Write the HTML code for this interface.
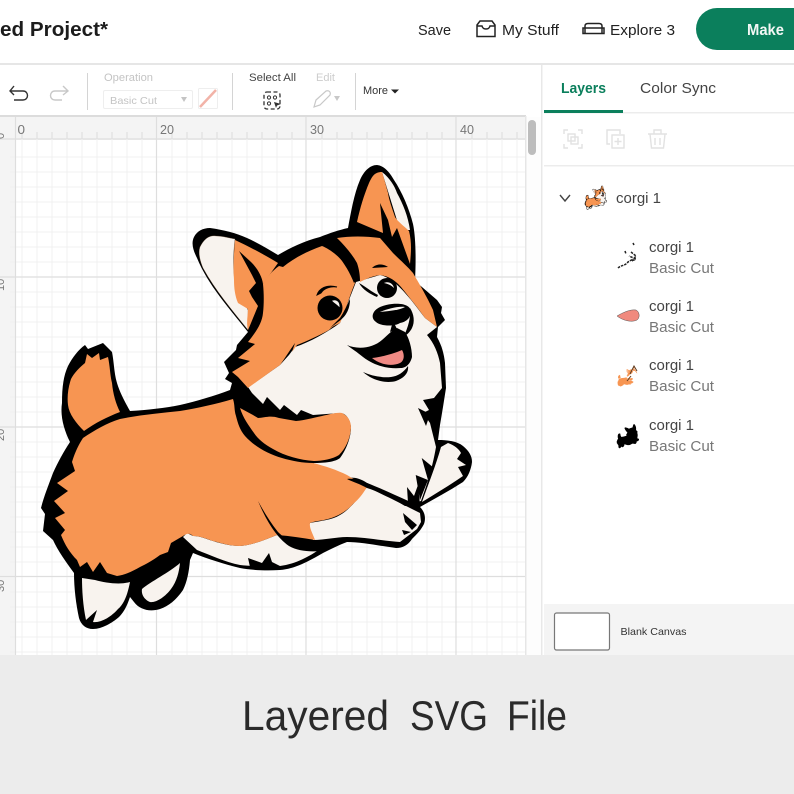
<!DOCTYPE html>
<html><head><meta charset="utf-8"><style>
html,body{margin:0;padding:0;background:#fff}
svg{display:block;font-family:"Liberation Sans",sans-serif}
</style></head><body>
<svg width="794" height="794" viewBox="0 0 794 794" xmlns="http://www.w3.org/2000/svg">
<defs>
<path id="sil" d="M377 165C385 166 390 173 394 180C402 192 409 208 413 224C416 238 416 262 415 281L437 300L442 307L441 313L445 320L438 327L437 337C442 346 444 354 445 363L446 388L443 407L440 425L438 440C447 440 457 441 463 446C469 451 472 456 472 462C471 470 468 477 463 482C449 491 434 499 420 507C425 512 426 518 424 524C421 530 417 534 412 539C408 545 403 548 396 548C380 546 362 542 347 542C339 545 331 549 323 553C309 561 295 569 280 570C265 571 251 570 240 568C224 564 208 559 193 553L190 560C189 572 187 582 183 590C176 600 169 606 160 609C150 612 140 610 134 602L130 597C127 606 124 612 119 617C112 623 102 629 93 629C86 629 81 625 79 618C76 604 74 588 74 573C66 562 58 551 53 540L43 531L45 514L41 508C44 496 49 484 53 473C58 462 64 451 70 442C64 430 60 416 62 403C62 389 63 377 68 366C72 358 79 349 85 345L88 349L103 343L112 352C114 362 114 373 117 383C120 393 125 402 130 411C147 410 165 408 180 405C197 401 214 396 230 390L232 383L225 379L229 373L224 362L236 350L237 345L248 332C229 308 208 285 197 258C193 250 191 243 194 237C197 231 203 228 210 228C224 230 236 233 247 238C258 243 268 249 278 255C290 248 304 241 320 237C330 233 339 230 348 228C351 212 354 194 360 180C364 171 370 165 377 165Z"/>
<path id="orb" d="M83 438C95 430 107 423 120 419C140 415 160 413 180 411C198 408 216 404 233 399C235 405 234 410 236 416C238 424 240 430 245 436C255 447 268 454 282 458C292 461 303 463 313 463C325 466 337 470 347 475L367 487C362 495 359 499 353 504C346 512 336 517 328 519C321 521 314 521 310 523C309 528 313 534 315 540C303 538 290 536 277 535C265 540 252 545 240 546C230 546 221 543 213 541C207 539 200 536 193 536C190 533 187 533 183 536L171 543L168 552L160 555C152 561 146 564 140 567C133 571 125 575 117 576L107 573L100 562L93 572L87 562L80 567L77 560C70 553 65 545 61 535L65 530L55 518L65 513L54 501L68 491L57 483L75 471L72 462C75 452 79 444 83 438Z"/>
<path id="ort" d="M85 363L87 354L92 358L99 353L100 360L108 357C110 366 110 375 112 383C113 394 116 404 120 412C107 417 95 423 84 431C76 423 69 414 68 405C67 397 68 388 71 379C74 373 80 367 85 363Z"/>
<path id="orarm" d="M240 408L253 415L258 418C264 418 270 415 279 418L296 421C306 420 312 418 322 416C330 414 339 412 342 413C348 416 351 421 351 428C350 440 345 449 339 455C333 459 322 461 314 461C300 460 285 456 273 449C264 444 258 439 254 433C249 426 243 418 240 408Z"/>
<path id="orh" d="M355 283C349 297 346 310 340 323C336 325 333 326 329 330C318 336 307 341 297 345L292 352L295 343C290 350 285 358 280 365C270 372 259 380 248 388L238 377L232 372L250 361L238 358L255 344L248 342C255 333 262 324 263 313C264 304 264 294 263 284C267 277 272 271 279 266L283 267C293 259 305 252 322 246C332 250 348 262 355 283Z"/>
<path id="ore" d="M235 240C248 246 265 255 278 263L263 284C262 276 257 268 251 262L239 251L252 275L256 283L249 291L252 297L258 306C255 313 252 321 248 330C246 323 248 315 248 309L238 303C235 296 234 288 234 280C233 266 234 252 235 240Z"/>
<path id="orf" d="M337 238C350 236 365 236 380 238L393 253C400 260 408 267 413 273C420 285 427 297 433 310L437 327L425 318C418 308 409 297 401 287C395 280 388 276 380 275C372 276 366 279 360 282C360 275 359 269 357 263C352 254 345 246 337 238Z"/>
<path id="orr" d="M382 172C374 172 372 177 369 183C364 195 360 208 357 222L383 233L380 203L388 220L392 237L397 228L410 264C411 253 412 243 409 231C404 226 398 222 395 217C392 208 389 200 388 193C386 186 384 178 382 172Z"/>
<path id="crc" d="M248 387C259 380 270 372 280 365L289 355L295 347C310 342 326 333 340 323L356 282L380 275C395 278 410 298 425 318L437 327L427 335C434 343 438 353 440 363L442 388L434 398L423 400L429 410L423 413L430 423L436 447C432 470 426 487 421 501L413 503C399 497 385 490 367 483C360 478 353 477 347 478C335 471 324 467 313 463C325 463 335 462 340 458C346 450 351 438 351 427C350 418 345 413 340 413L313 415L301 410L297 415L284 405L280 410L267 397L263 404L252 393L248 387Z"/>
<g id="orall"><use href="#orb"/><use href="#ort"/><use href="#orarm"/><use href="#orh"/><use href="#ore"/><use href="#orf"/><use href="#orr"/></g>
<g id="dog">
<use href="#sil" fill="#000"/>
<path d="M200 247C204 239 209 235 216 236C222 236 229 238 235 239C233 255 233 270 235 283L248 310L248 330C232 310 215 290 203 268C200 261 198 253 200 247Z" fill="#f8f3ee" stroke="#7a5a40" stroke-width=".3"/>
<path d="M382 172C390 178 395 187 397 193C403 204 408 216 410 230L400 230Z" fill="#f8f3ee"/>
<use href="#crc" fill="#f8f3ee"/>
<path d="M367 487C375 491 388 497 404 505L420 513L421 522L417 529L400 542C383 541 365 537 347 537C336 537 325 540 313 540C310 533 308 527 310 523C320 521 332 520 340 515C349 510 358 499 367 487Z" fill="#f8f3ee"/>
<path d="M183 537L187 533L193 536C200 536 206 539 213 541C222 544 232 546 240 546C252 545 265 540 277 535L290 543C296 546 304 549 320 549C310 556 296 564 280 566C265 567 250 566 240 565C225 562 210 555 197 550Z" fill="#f8f3ee"/>
<path d="M248 558L262 563L269 553L272 562L282 567L250 567Z" fill="#000"/>
<path d="M82 578L95 580C106 583 120 585 130 582C128 592 125 603 118 609C111 617 101 623 93 622L97 610L86 620C83 606 82 590 82 578Z" fill="#f8f3ee"/>
<path d="M180 563C179 572 177 581 171 589C165 597 156 603 150 602C145 600 141 595 142 589C150 582 170 572 180 563Z" fill="#f8f3ee"/>
<path d="M441 447L448 443C454 445 459 449 461 453L457 459L466 465L458 467L463 476C450 485 435 494 422 502C428 485 436 465 441 447Z" fill="#f8f3ee"/>
<use href="#orall" fill="#f79552"/>
<path d="M258 501C264 512 270 522 278 532C286 540 300 547 312 548L320 548L322 551C308 552 298 551 289 546C276 537 266 520 258 501Z" fill="#000"/>
<path d="M347 479C355 478 364 481 373 486C385 492 399 499 413 506L405 506C392 498 380 492 367 488C360 484 353 482 347 479Z" fill="#000"/>
<path d="M403 513L417 525L412 530L405 522ZM402 530L411 532L404 535Z" fill="#000"/>
<path d="M418 408L430 414L426 426ZM421.700 458L434 468L428 480ZM415.700 475L428 480L420 500ZM407 487L414 496L418 485L420 505L408 503Z" fill="#000"/>
<path d="M329 241C340 248 351 258 358 276L354 283C349 270 339 254 326 244Z" fill="#000"/>
<path d="M317 295C319 289 326 284 337 287C331 286 324 288 321 293Z" fill="#000" stroke="#000" stroke-width="1"/>
<path d="M372 268C377 263 383 264 388 267Z" fill="#000"/>
<circle cx="330" cy="308" r="12.500" fill="#000"/>
<path d="M333 301C336 300 339 302 339 306C337 304 335 303 333 301Z" fill="#f8f3ee" stroke="#f8f3ee" stroke-width="1"/>
<path d="M350 299C350 308 347 316 338 322L330 328L340 318C344 312 347 305 350 299Z" fill="#000"/>
<ellipse cx="387" cy="288" rx="10" ry="10" fill="#000"/>
<path d="M384 283C388 281 393 283 394 288C391 285 388 284 384 283Z" fill="#f8f3ee"/>
<path d="M359 283C366 287 372 292 378 295L377 297C370 294 363 290 359 283Z" fill="#000"/>
<path d="M373 314C375 308 383 305 392 304C402 303 410 305 411 311C411 318 406 322 400 323C394 327 380 326 376 322C373 320 372 317 373 314Z" fill="#000"/>
<path d="M380 312C387 309 398 306 405 307C400 310 390 311 380 312Z" fill="#f8f3ee"/>
<path d="M410 308C414 314 415 322 412 328C410 332 407 335 404 336C408 327 411 318 410 308ZM393 321L397 329L390 332Z" fill="#000"/>
<path d="M347 345C358 350 373 348 382 340C388 335 392 330 397 328L405 332C409 338 412 348 412 357C410 365 405 368 401 368C390 369 376 367 363 357C357 352 352 349 347 345Z" fill="#000"/>
<path d="M372 358C381 357 393 354 402 350C405 355 404 361 400 363C391 367 379 364 372 358Z" fill="#f08a84"/>
<path d="M363 372C372 376 382 378 391 377C398 376 403 373 408 366C409 373 404 378 396 381C385 384 372 380 363 372Z" fill="#000"/>
</g>
</defs>
<rect width="794" height="794" fill="#fff"/>

<!-- header -->
<rect x="0" y="63" width="794" height="2" fill="#e6e6e6"/>
<text x="0" y="36" font-size="20" font-weight="bold" fill="#1c1c1c" textLength="108" lengthAdjust="spacingAndGlyphs">ed Project*</text>
<text x="418" y="35" font-size="15" fill="#222" textLength="33" lengthAdjust="spacingAndGlyphs">Save</text>
<path d="M477 25L480 21H492L495 25V36.500H477ZM477 26H482C483 30 489 30 490 26H495" fill="none" stroke="#222" stroke-width="1.500"/>
<text x="502" y="35" font-size="15" fill="#222" textLength="57" lengthAdjust="spacingAndGlyphs">My Stuff</text>
<path d="M585 31V26C585 24.500 586 23.500 588 23.500H599C601 23.500 602 24.500 602 26V31M583 28H604V33.500H583ZM585 28V33M602 28V33" fill="none" stroke="#222" stroke-width="1.500"/>
<text x="610" y="35" font-size="15" fill="#222" textLength="65" lengthAdjust="spacingAndGlyphs">Explore 3</text>
<rect x="696" y="8" width="140" height="42" rx="21" fill="#0b7f5c"/>
<text x="747" y="35" font-size="15.500" font-weight="bold" fill="#f2f7f4" textLength="37" lengthAdjust="spacingAndGlyphs">Make</text>

<!-- toolbar -->
<path d="M10 91H23C29 91 29 100 23 100H14M14 86L10 91L14 95" fill="none" stroke="#333" stroke-width="1.400"/>
<path d="M68 91H55C49 91 49 100 55 100H62M63 86L68 91L63 95" fill="none" stroke="#c8c8c8" stroke-width="1.400"/>
<rect x="87" y="73" width="1" height="37" fill="#d4d4d4"/>
<rect x="232" y="73" width="1" height="37" fill="#d4d4d4"/>
<rect x="355" y="73" width="1" height="37" fill="#d4d4d4"/>
<text x="104" y="81" font-size="11" fill="#c4c4c4" textLength="49" lengthAdjust="spacingAndGlyphs">Operation</text>
<rect x="103.500" y="90.500" width="89" height="18" rx="1.500" fill="#fff" stroke="#eee"/>
<text x="110" y="104" font-size="10.500" fill="#c4c4c4" textLength="47" lengthAdjust="spacingAndGlyphs">Basic Cut</text>
<path d="M181 97H187L184 102Z" fill="#c4c4c4"/>
<rect x="198.500" y="88.500" width="19" height="20" rx="1" fill="#fff" stroke="#eee"/>
<path d="M200 107L216 90" stroke="#f2b3a8" stroke-width="2.500"/>
<text x="249" y="81" font-size="11" fill="#444" textLength="47" lengthAdjust="spacingAndGlyphs">Select All</text>
<rect x="264" y="92" width="16" height="17" rx="3" fill="none" stroke="#333" stroke-width="1.300" stroke-dasharray="4 2.500"/>
<circle cx="269" cy="97.500" r="1.600" fill="none" stroke="#333"/><circle cx="275" cy="97.500" r="1.600" fill="none" stroke="#333"/><circle cx="269" cy="103.500" r="1.600" fill="none" stroke="#333"/>
<path d="M274 102L281 104L277 105.500L276 108Z" fill="#333"/>
<text x="316" y="81" font-size="11" fill="#cdcdcd" textLength="19" lengthAdjust="spacingAndGlyphs">Edit</text>
<path d="M314 107L316 100L326 91C329 90 331 92 330 95L320 105Z" fill="none" stroke="#c8c8c8" stroke-width="1.200"/>
<path d="M334 96H340L337 101Z" fill="#c8c8c8"/>
<text x="363" y="94" font-size="11" fill="#333" textLength="25" lengthAdjust="spacingAndGlyphs">More</text>
<path d="M391 89.500H399L395 93.500Z" fill="#222"/>

<!-- canvas -->
<rect x="0" y="115" width="526" height="2" fill="#dcdcdc"/>
<rect x="0" y="117" width="526" height="22" fill="#f4f4f4"/>
<rect x="0" y="117" width="15" height="538" fill="#f4f4f4"/>
<rect x="15" y="139" width="510" height="516" fill="#fff"/>
<rect x="0" y="138" width="526" height="2" fill="#e6e6e6"/>
<g stroke="#f1f1f1" stroke-width="1">
<path d="M22 139V655M37 139V655M52 139V655M67 139V655M82 139V655M97 139V655M112 139V655M127 139V655M142 139V655M172 139V655M187 139V655M202 139V655M217 139V655M232 139V655M247 139V655M262 139V655M277 139V655M292 139V655M322 139V655M337 139V655M352 139V655M367 139V655M382 139V655M397 139V655M412 139V655M427 139V655M442 139V655M472 139V655M487 139V655M502 139V655M517 139V655"/>
<path d="M10 157H525M10 172H525M10 187H525M10 202H525M10 217H525M10 232H525M10 247H525M10 262H525M10 292H525M10 307H525M10 322H525M10 337H525M10 352H525M10 367H525M10 382H525M10 397H525M10 412H525M10 442H525M10 457H525M10 472H525M10 487H525M10 502H525M10 517H525M10 532H525M10 547H525M10 562H525M10 592H525M10 607H525M10 622H525M10 637H525M10 652H525"/>
</g>
<g stroke="#ddd" stroke-width="1" fill="none">
<path d="M22 132V139M37 132V139M52 132V139M67 132V139M82 132V139M97 132V139M112 132V139M127 132V139M142 132V139M172 132V139M187 132V139M202 132V139M217 132V139M232 132V139M247 132V139M262 132V139M277 132V139M292 132V139M322 132V139M337 132V139M352 132V139M367 132V139M382 132V139M397 132V139M412 132V139M427 132V139M442 132V139M472 132V139M487 132V139M502 132V139M517 132V139"/>
</g>
<g stroke="#dedede" stroke-width="1.200">
<path d="M15.500 117V655M156.500 117V655M306 117V655M456 117V655"/>
<path d="M0 277H525M0 427H525M0 576.500H525"/>
</g>
<g font-size="13" fill="#777"><text x="17.500" y="134" textLength="7.500" lengthAdjust="spacingAndGlyphs">0</text><text x="160" y="134" textLength="14" lengthAdjust="spacingAndGlyphs">20</text><text x="310" y="134" textLength="14" lengthAdjust="spacingAndGlyphs">30</text><text x="460" y="134" textLength="14" lengthAdjust="spacingAndGlyphs">40</text></g>
<g font-size="11" fill="#777"><text transform="translate(4,139) rotate(-90)">0</text><text transform="translate(4,291) rotate(-90)">10</text><text transform="translate(4,441) rotate(-90)">20</text><text transform="translate(4,592) rotate(-90)">30</text></g>
<rect x="525" y="117" width="16" height="538" fill="#fdfdfd"/>
<rect x="525" y="116" width="1.500" height="539" fill="#e6e6e6"/>
<rect x="528" y="120" width="8" height="35" rx="4" fill="#bdbdbd"/>
<rect x="541" y="65" width="1.500" height="590" fill="#e8e8e8"/>

<use href="#dog"/>

<!-- side panel -->
<text x="561" y="93" font-size="15" font-weight="bold" fill="#0b7f5c" textLength="45" lengthAdjust="spacingAndGlyphs">Layers</text>
<text x="640" y="93" font-size="15" fill="#444" textLength="76" lengthAdjust="spacingAndGlyphs">Color Sync</text>
<rect x="544" y="112" width="250" height="1.500" fill="#ececec"/>
<rect x="544" y="110" width="79" height="3" fill="#0b7f5c"/>
<g fill="none" stroke="#e2e2e2" stroke-width="1.400">
<path d="M564 134V130H568M578 130H582V134M582 144V148H578M568 148H564V144"/>
<rect x="568" y="134" width="7" height="7"/><rect x="571" y="137" width="7" height="7"/>
<path d="M610 144H607V130H620V134"/><rect x="612" y="135" width="12" height="13"/><path d="M618 138V145M614.500 141.500H621.500"/>
<path d="M648 134H667M654 134V130H661V134M650 134L651.500 148H663.500L665 134M655 138V145M660 138V145"/>
</g>
<rect x="544" y="165" width="250" height="1.500" fill="#ececec"/>
<path d="M560 195L565 201L570 195" fill="none" stroke="#444" stroke-width="1.400"/>
<use href="#dog" transform="translate(582.500,177) scale(.052)"/>
<text x="616" y="203" font-size="15" fill="#444" textLength="45" lengthAdjust="spacingAndGlyphs">corgi 1</text>

<path d="M618 268C621 265 625 266 628 262L633 259M625 251L626 254M633 243L634 245M631 252L636 256L632 261L636 259L629 256" fill="none" stroke="#222" stroke-width="1.500" stroke-dasharray="2.500 1"/>
<text x="649" y="252" font-size="15" fill="#444" textLength="45" lengthAdjust="spacingAndGlyphs">corgi 1</text>
<text x="649" y="273" font-size="15" fill="#777" textLength="65" lengthAdjust="spacingAndGlyphs">Basic Cut</text>

<path d="M617 316C622 313 630 309 636 310C640 312 640 318 637 320C631 323 622 320 617 316Z" fill="#f08a7e" stroke="#555" stroke-width=".5"/>
<text x="649" y="311" font-size="15" fill="#444" textLength="45" lengthAdjust="spacingAndGlyphs">corgi 1</text>
<text x="649" y="332" font-size="15" fill="#777" textLength="65" lengthAdjust="spacingAndGlyphs">Basic Cut</text>

<use href="#orall" fill="#f79552" transform="translate(614.500,356.500) scale(.052)"/>
<path d="M630 374L634 366L637 371M627 381L631 376" stroke="#5a3a20" stroke-width="1" fill="none"/>
<text x="649" y="370" font-size="15" fill="#444" textLength="45" lengthAdjust="spacingAndGlyphs">corgi 1</text>
<text x="649" y="391" font-size="15" fill="#777" textLength="65" lengthAdjust="spacingAndGlyphs">Basic Cut</text>

<use href="#sil" fill="#000" transform="translate(614.500,415.500) scale(.052)"/>
<text x="649" y="430" font-size="15" fill="#444" textLength="45" lengthAdjust="spacingAndGlyphs">corgi 1</text>
<text x="649" y="451" font-size="15" fill="#777" textLength="65" lengthAdjust="spacingAndGlyphs">Basic Cut</text>

<!-- blank canvas -->
<rect x="544" y="604" width="250" height="51" fill="#f4f4f4"/>
<rect x="554.500" y="613" width="55" height="37" rx="2" fill="#fff" stroke="#777" stroke-width="1.200"/>
<text x="620.500" y="635" font-size="10.500" fill="#333" textLength="66" lengthAdjust="spacingAndGlyphs">Blank Canvas</text>

<!-- caption -->
<rect x="0" y="655" width="794" height="139" fill="#ececec"/>
<g font-size="42" fill="#2a2a2a">
<text x="242" y="730" textLength="147" lengthAdjust="spacingAndGlyphs">Layered</text>
<text x="410" y="730" textLength="78" lengthAdjust="spacingAndGlyphs">SVG</text>
<text x="507" y="730" textLength="60" lengthAdjust="spacingAndGlyphs">File</text>
</g>
</svg>
</body></html>
